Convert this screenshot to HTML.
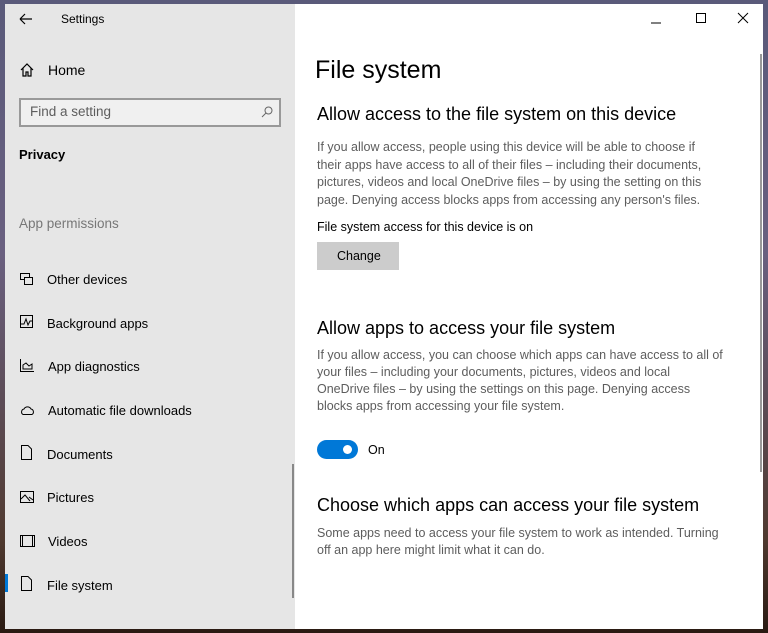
<!DOCTYPE html>
<html><head><meta charset="utf-8"><style>
*{margin:0;padding:0;box-sizing:border-box}
body{width:768px;height:633px;overflow:hidden;background:linear-gradient(180deg,#5a5a7a 0%,#6a6080 40%,#503a30 85%,#2a1a12 100%);font-family:"Liberation Sans",sans-serif;position:relative}
#win{position:absolute;left:5px;top:4px;width:758px;height:625px;background:#fff}
#side{position:absolute;left:0;top:0;width:290px;height:625px;background:#e6e6e6}
.t{position:absolute;white-space:nowrap;color:#000}
.s13{font-size:13px}
.g{color:#5d5d5d}
.p{font-size:12.5px}
.h{font-size:18px}
svg{position:absolute;overflow:visible}
</style></head><body>
<div id="win">
<div id="side">
<svg style="left:14px;top:9px" width="14" height="12"><path d="M1 6H13M1 6L6 1M1 6L6 11" stroke="#000" stroke-width="1.2" fill="none"/></svg>
<div class="t" style="left:56px;top:8px;font-size:12px">Settings</div>
<svg style="left:15px;top:59px" width="14" height="14"><path d="M1 7L7 1L13 7M3 5V13H6V9H8V13H11V5" stroke="#000" stroke-width="1.2" fill="none"/></svg>
<div class="t" style="left:43px;top:58px;font-size:14px">Home</div>
<div style="position:absolute;left:14px;top:94px;width:262px;height:29px;border:2px solid #999;background:#f0f0f0"></div>
<div class="t g" style="left:25px;top:100px;font-size:13.5px">Find a setting</div>
<svg style="left:256px;top:102px" width="12" height="12"><circle cx="7.5" cy="4.5" r="3.5" stroke="#666" fill="none"/><path d="M5 7L1 11" stroke="#666"/></svg>
<div class="t" style="left:14px;top:143px;font-size:13px;font-weight:bold">Privacy</div>
<div class="t g" style="left:14px;top:212px;font-size:13.5px;color:#777">App permissions</div>

<svg style="left:15px;top:269px" width="14" height="12"><rect x="0.5" y="0.5" width="9" height="6" stroke="#000" fill="none"/><rect x="4.5" y="4.5" width="8" height="7" stroke="#000" fill="#e6e6e6"/></svg>
<div class="t s13" style="left:42px;top:268px">Other devices</div>
<svg style="left:15px;top:311px" width="13" height="13"><rect x="0.5" y="0.5" width="12" height="12" stroke="#000" fill="none"/><path d="M1 9H4L6 4L8 10L10 6H12" stroke="#000" fill="none"/></svg>
<div class="t s13" style="left:42px;top:312px">Background apps</div>
<svg style="left:15px;top:355px" width="14" height="13"><path d="M0.5 0V12.5H14M3 10V6L6 4L9 7L12 5V10Z" stroke="#000" fill="none"/></svg>
<div class="t s13" style="left:43px;top:355px">App diagnostics</div>
<svg style="left:14px;top:402px" width="16" height="9"><path d="M4 8.5H13A3 3 0 0 0 12 3A4 4 0 0 0 5 3A3 3 0 0 0 4 8.5Z" stroke="#000" fill="none"/></svg>
<div class="t s13" style="left:43px;top:399px">Automatic file downloads</div>
<svg style="left:16px;top:441px" width="11" height="15"><path d="M0.5 0.5H7L10.5 4V14.5H0.5Z" stroke="#000" fill="none"/></svg>
<div class="t s13" style="left:42px;top:443px">Documents</div>
<svg style="left:15px;top:487px" width="14" height="12"><rect x="0.5" y="0.5" width="13" height="11" stroke="#000" fill="none"/><path d="M1 8L5 4L10 10M9 6L13 9" stroke="#000" fill="none"/></svg>
<div class="t s13" style="left:42px;top:486px">Pictures</div>
<svg style="left:15px;top:531px" width="15" height="12"><rect x="0.5" y="0.5" width="14" height="11" stroke="#000" fill="none"/><path d="M2.5 1V11M12.5 1V11" stroke="#000"/></svg>
<div class="t s13" style="left:43px;top:530px">Videos</div>
<div style="position:absolute;left:0;top:570px;width:3px;height:18px;background:#0078d7"></div>
<svg style="left:16px;top:572px" width="11" height="15"><path d="M0.5 0.5H7L10.5 4V14.5H0.5Z" stroke="#000" fill="none"/></svg>
<div class="t s13" style="left:42px;top:574px">File system</div>
<div style="position:absolute;left:287px;top:460px;width:2px;height:134px;background:#888"></div>
</div>

<svg style="left:645px;top:13px" width="12" height="12"><path d="M1 6H11" stroke="#000"/></svg>
<svg style="left:691px;top:9px" width="10" height="10"><rect x="0.5" y="0.5" width="9" height="9" stroke="#000" fill="none"/></svg>
<svg style="left:733px;top:9px" width="10" height="10"><path d="M0 0L10 10M10 0L0 10" stroke="#000"/></svg>

<div class="t" style="left:310px;top:52px;font-size:25px;color:#000">File system</div>
<div class="t h" style="left:312px;top:100px">Allow access to the file system on this device</div>
<div class="t g p" style="left:312px;top:135px;line-height:17.5px">If you allow access, people using this device will be able to choose if<br>their apps have access to all of their files – including their documents,<br>pictures, videos and local OneDrive files – by using the setting on this<br>page. Denying access blocks apps from accessing any person's files.</div>
<div class="t s13" style="left:312px;top:216px;font-size:12.5px">File system access for this device is on</div>
<div style="position:absolute;left:312px;top:238px;width:82px;height:28px;background:#ccc"></div>
<div class="t s13" style="left:332px;top:245px;font-size:12.5px">Change</div>
<div class="t h" style="left:312px;top:314px">Allow apps to access your file system</div>
<div class="t g p" style="left:312px;top:343px;line-height:17px">If you allow access, you can choose which apps can have access to all of<br>your files – including your documents, pictures, videos and local<br>OneDrive files – by using the settings on this page. Denying access<br>blocks apps from accessing your file system.</div>
<div style="position:absolute;left:312px;top:436px;width:41px;height:19px;border-radius:10px;background:#0078d7"></div>
<div style="position:absolute;left:338px;top:441px;width:9px;height:9px;border-radius:50%;background:#fff"></div>
<div class="t s13" style="left:363px;top:439px;font-size:12.5px">On</div>
<div class="t h" style="left:312px;top:491px">Choose which apps can access your file system</div>
<div class="t g p" style="left:312px;top:521px;line-height:17px">Some apps need to access your file system to work as intended. Turning<br>off an app here might limit what it can do.</div>
<div style="position:absolute;left:755px;top:50px;width:2px;height:418px;background:#999"></div>
</div>
</body></html>
